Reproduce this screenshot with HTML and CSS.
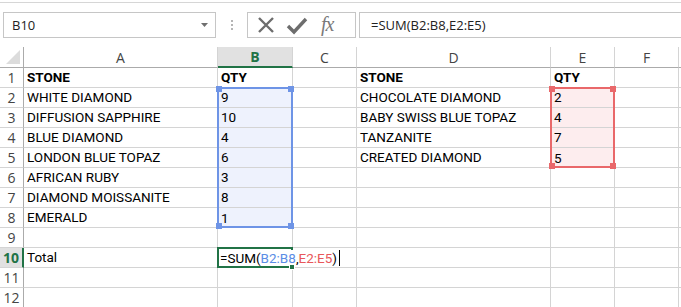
FILE: index.html
```html
<!DOCTYPE html>
<html>
<head>
<meta charset="utf-8">
<link rel="stylesheet" href="styles.css">
</head>
<body>
<div class="topline"></div>
<div class="fbar">
  <div class="namebox">
    <span class="nb-text">B10</span>
    <svg class="nb-arrow" width="7" height="4" viewBox="0 0 7 4"><path d="M0 0H7L3.5 4Z" fill="#6f6f6f"/></svg>
  </div>
  <div class="dots"><i></i><i></i><i></i></div>
  <div class="btns">
    <svg class="ic-x" width="20" height="20" viewBox="0 0 20 20"><path d="M3 3L17 17M17 3L3 17" stroke="#6d6d6d" stroke-width="2.4" fill="none"/></svg>
    <svg class="ic-ok" width="22" height="20" viewBox="0 0 22 20"><path d="M2 11L8 17L20 4" stroke="#6d6d6d" stroke-width="3.4" fill="none" stroke-linejoin="miter"/></svg>
    <span class="fx">fx</span>
  </div>
  <div class="finput">=SUM(B2:B8,E2:E5)</div>
</div>
<div class="sheet">
  <div class="cells">
    <div class="corner"><svg width="14" height="14" viewBox="0 0 14 14"><path d="M14 0V14H0Z" fill="#dcdcdc"/></svg></div>
    <div class="ch">A</div>
    <div class="ch sel">B</div>
    <div class="ch">C</div>
    <div class="ch">D</div>
    <div class="ch">E</div>
    <div class="ch">F</div>
    <div class="ch last"></div>

    <div class="rh">1</div><div class="c b">STONE</div><div class="c b">QTY</div><div class="c"></div><div class="c b">STONE</div><div class="c b">QTY</div><div class="c"></div><div class="c last"></div>
    <div class="rh">2</div><div class="c">WHITE DIAMOND</div><div class="c"></div><div class="c"></div><div class="c">CHOCOLATE DIAMOND</div><div class="c"></div><div class="c"></div><div class="c last"></div>
    <div class="rh">3</div><div class="c">DIFFUSION SAPPHIRE</div><div class="c"></div><div class="c"></div><div class="c">BABY SWISS BLUE TOPAZ</div><div class="c"></div><div class="c"></div><div class="c last"></div>
    <div class="rh">4</div><div class="c">BLUE DIAMOND</div><div class="c"></div><div class="c"></div><div class="c">TANZANITE</div><div class="c"></div><div class="c"></div><div class="c last"></div>
    <div class="rh">5</div><div class="c">LONDON BLUE TOPAZ</div><div class="c"></div><div class="c"></div><div class="c">CREATED DIAMOND</div><div class="c"></div><div class="c"></div><div class="c last"></div>
    <div class="rh">6</div><div class="c">AFRICAN RUBY</div><div class="c"></div><div class="c"></div><div class="c"></div><div class="c"></div><div class="c"></div><div class="c last"></div>
    <div class="rh">7</div><div class="c">DIAMOND MOISSANITE</div><div class="c"></div><div class="c"></div><div class="c"></div><div class="c"></div><div class="c"></div><div class="c last"></div>
    <div class="rh">8</div><div class="c">EMERALD</div><div class="c"></div><div class="c"></div><div class="c"></div><div class="c"></div><div class="c"></div><div class="c last"></div>
    <div class="rh">9</div><div class="c"></div><div class="c"></div><div class="c"></div><div class="c"></div><div class="c"></div><div class="c"></div><div class="c last"></div>
    <div class="rh sel">10</div><div class="c">Total</div><div class="c"></div><div class="c"></div><div class="c"></div><div class="c"></div><div class="c"></div><div class="c last"></div>
    <div class="rh">11</div><div class="c"></div><div class="c"></div><div class="c"></div><div class="c"></div><div class="c"></div><div class="c"></div><div class="c last"></div>
    <div class="rh">12</div><div class="c"></div><div class="c"></div><div class="c"></div><div class="c"></div><div class="c"></div><div class="c"></div><div class="c last"></div>
  </div>
  <div class="layer">
    <div class="range blue">
      <div class="rv">9</div><div class="rv">10</div><div class="rv">4</div><div class="rv">6</div><div class="rv">3</div><div class="rv">8</div><div class="rv">1</div>
      <i class="h tl"></i><i class="h tr"></i><i class="h bl"></i><i class="h br"></i>
    </div>
    <div class="range red">
      <div class="rv">2</div><div class="rv">4</div><div class="rv">7</div><div class="rv">5</div>
      <i class="h tl"></i><i class="h tr"></i><i class="h bl"></i><i class="h br"></i>
    </div>
    <div class="active"><span class="formula">=SUM(<span class="rb">B2:B8</span>,<span class="rr">E2:E5</span>)<span class="caret"></span></span><i class="fill"></i></div>
  </div>
</div>
</body>
</html>
```
FILE: styles.css
```css
* { box-sizing: border-box; }
html, body { margin: 0; padding: 0; background: #fff; }
body { width: 681px; height: 307px; overflow: hidden; font-family: "Open Sans", "Noto Sans", sans-serif; }

.topline { height: 3px; border-bottom: 1px solid #d6d6d6; border-top: 1px solid #fff; }

.fbar { display: flex; align-items: stretch; height: 26px; margin-top: 9px; }
.namebox { margin-left: 3px; width: 213px; border: 1px solid #c6c6c6; display: flex; align-items: center; padding-left: 8px; padding-right: 7px; }
.nb-text { flex: 1; font-family: "Open Sans", sans-serif; font-size: 13px; color: #222; }
.nb-arrow { display: block; }
.dots { width: 31px; display: flex; flex-direction: column; align-items: center; justify-content: center; gap: 2px; }
.dots i { display: block; width: 2px; height: 2px; background: #b5b5b5; }
.btns { width: 109px; border: 1px solid #c6c6c6; display: flex; align-items: center; padding-left: 8px; }
.ic-x { margin-right: 10px; }
.ic-ok { margin-right: 13px; }
.fx { font-family: "Liberation Serif", serif; font-style: italic; font-size: 20px; color: #7a7a7a; letter-spacing: -1px; line-height: 1; margin-top: -2px; }
.finput { flex: 1; margin-left: 3px; border: 1px solid #c6c6c6; border-right: none; padding-left: 11px; font-family: "Open Sans", sans-serif; font-size: 13px; color: #222; display: flex; align-items: center; }

.sheet { margin-top: 9px; display: grid; }
.cells, .layer {
  grid-area: 1 / 1;
  display: grid;
  grid-template-columns: 24px 194px 75px 64px 194px 64px 64px 3px;
  grid-template-rows: 21px repeat(12, 20px);
  font-family: "Roboto", "Noto Sans", sans-serif;
  font-size: 13.5px;
  color: #000;
}
.layer { z-index: 2; }
.corner { border-right: 1px solid #ababab; border-bottom: 1px solid #ababab; display: flex; align-items: flex-end; justify-content: flex-end; padding: 0 3px 3px 0; }
.corner svg { display: block; }
.ch { border-right: 1px solid #d4d4d4; border-bottom: 1px solid #ababab; display: flex; align-items: center; justify-content: center; color: #444; font-family: "Open Sans", sans-serif; font-size: 14px; }
.ch.sel { background: #e1e1e1; color: #217346; font-weight: bold; border-bottom: 2px solid #217346; }
.ch.last { border-right: none; }
.rh { border-right: 1px solid #ababab; border-bottom: 1px solid #d4d4d4; display: flex; align-items: center; justify-content: center; color: #444; font-family: "Open Sans", sans-serif; font-size: 14px; }
.rh.sel { background: #e1e1e1; color: #217346; font-weight: bold; border-right: 2px solid #217346; }
.c { border-right: 1px solid #d4d4d4; border-bottom: 1px solid #d4d4d4; display: flex; align-items: flex-end; padding: 0 0 1px 3px; white-space: nowrap; line-height: 18px; }
.c.last { border-right: none; }
.c.b { font-weight: bold; }

.range { position: relative; margin: -1px 0 0 -1px; border: 2px solid; display: flex; flex-direction: column; }
.range.blue { grid-column: 3; grid-row: 3 / 10; border-color: #6e94e6; background: rgba(226, 234, 252, 0.6); }
.range.red { grid-column: 6; grid-row: 3 / 7; border-color: #e9686a; background: rgba(252, 223, 224, 0.55); }
.rv { height: 20px; flex: none; border-bottom: 1px solid #d4d4d4; display: flex; align-items: flex-end; padding: 0 0 1px 2px; line-height: 18px; }
.rv:first-child { height: 19px; }
.rv:nth-last-of-type(1) { border-bottom: none; }
.h { position: absolute; width: 6px; height: 6px; }
.blue .h { background: #6e94e6; }
.red .h { background: #e9686a; }
.h.tl { top: -3px; left: -3px; }
.h.tr { top: -3px; right: -3px; }
.h.bl { bottom: -3px; left: -3px; }
.h.br { bottom: -3px; right: -3px; }

.active { grid-column: 3; grid-row: 11; position: relative; margin: -1px 0 0 -1px; border: 2px solid #217346; background: #fff; display: flex; align-items: center; }
.formula { white-space: nowrap; padding: 0 2px 0 1px; line-height: 16px; height: 16px; position: relative; z-index: 1; display: flex; align-items: center; background: #fff; }
.rb { color: #5b8de6; }
.rr { color: #e8575a; }
.caret { display: inline-block; width: 1px; height: 16px; background: #000; margin-left: 2px; }
.fill { position: absolute; right: -4px; bottom: -4px; width: 6px; height: 6px; background: #217346; border: 1px solid #fff; z-index: 2; }
```
